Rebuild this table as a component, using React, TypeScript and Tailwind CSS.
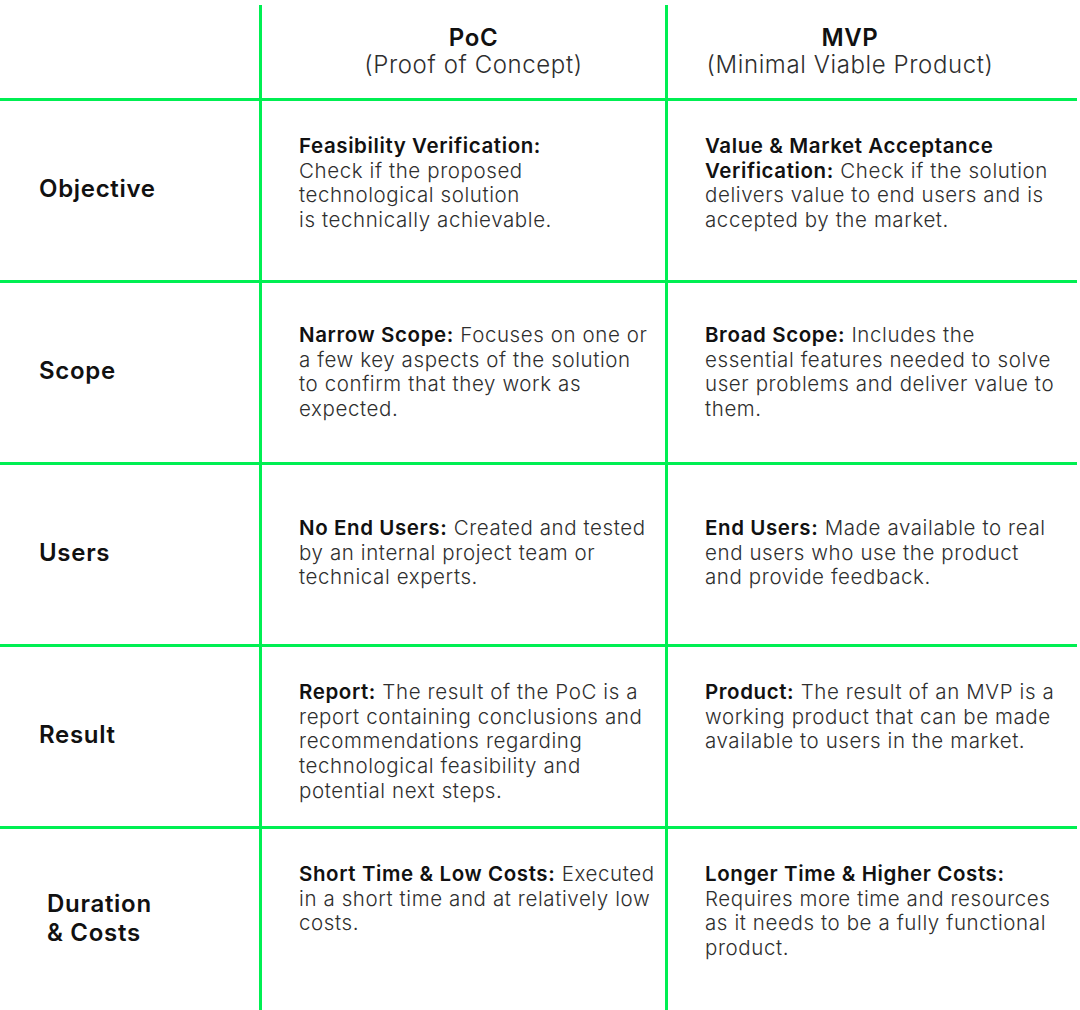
import React from 'react';

type Line = [string, string];

interface Row {
  label: string[];
  labelPad: string;
  top: string;
  poc: Line[];
  mvp: Line[];
}

const ROWS: Row[] = [
  {
    label: ['Objective'],
    labelPad: 'pl-[39px]',
    top: 'pt-[33px]',
    poc: [
      ['Feasibility Verification:', ''],
      ['', 'Check if the proposed'],
      ['', 'technological solution'],
      ['', 'is technically achievable.'],
    ],
    mvp: [
      ['Value & Market Acceptance', ''],
      ['Verification:', ' Check if the solution'],
      ['', 'delivers value to end users and is'],
      ['', 'accepted by the market.'],
    ],
  },
  {
    label: ['Scope'],
    labelPad: 'pl-[39px]',
    top: 'pt-[40px]',
    poc: [
      ['Narrow Scope:', ' Focuses on one or'],
      ['', 'a few key aspects of the solution'],
      ['', 'to confirm that they work as'],
      ['', 'expected.'],
    ],
    mvp: [
      ['Broad Scope:', ' Includes the'],
      ['', 'essential features needed to solve'],
      ['', 'user problems and deliver value to'],
      ['', 'them.'],
    ],
  },
  {
    label: ['Users'],
    labelPad: 'pl-[39px]',
    top: 'pt-[51px]',
    poc: [
      ['No End Users:', ' Created and tested'],
      ['', 'by an internal project team or'],
      ['', 'technical experts.'],
    ],
    mvp: [
      ['End Users:', ' Made available to real'],
      ['', 'end users who use the product'],
      ['', 'and provide feedback.'],
    ],
  },
  {
    label: ['Result'],
    labelPad: 'pl-[39px]',
    top: 'pt-[33px]',
    poc: [
      ['Report:', ' The result of the PoC is a'],
      ['', 'report containing conclusions and'],
      ['', 'recommendations regarding'],
      ['', 'technological feasibility and'],
      ['', 'potential next steps.'],
    ],
    mvp: [
      ['Product:', ' The result of an MVP is a'],
      ['', 'working product that can be made'],
      ['', 'available to users in the market.'],
    ],
  },
  {
    label: ['Duration', '& Costs'],
    labelPad: 'pl-[47px]',
    top: 'pt-[33px]',
    poc: [
      ['Short Time & Low Costs:', ' Executed'],
      ['', 'in a short time and at relatively low'],
      ['', 'costs.'],
    ],
    mvp: [
      ['Longer Time & Higher Costs:', ''],
      ['', 'Requires more time and resources'],
      ['', 'as it needs to be a fully functional'],
      ['', 'product.'],
    ],
  },
];

function Cell({ lines, top }: { lines: Line[]; top: string }) {
  return (
    <div className={`flex-1 border-l-[3px] border-[#00ef52] pl-[37px] ${top}`}>
      {lines.map(([b, t], i) => (
        <div key={i} className="whitespace-nowrap text-[20.5px] leading-[24.7px] tracking-[0.6px]">
          {b && <span className="font-semibold text-[#111]">{b}</span>}
          {t && <span className="font-light text-[#2e2e2e]">{t}</span>}
        </div>
      ))}
    </div>
  );
}

export default function App() {
  return (
    <div className="w-[1080px] h-[1010px] bg-white overflow-hidden font-['Inter',sans-serif]">
      <div className="w-[1077px] pt-[5px]">
        {/* header */}
        <div className="flex h-[96px] border-b-[3px] border-[#00ef52]">
          <div className="w-[259px] shrink-0" />
          <div className="w-[406px] shrink-0 border-l-[3px] border-[#00ef52] pl-[20px] pt-[19px] text-center tracking-[0.6px]">
            <div className="text-[24px] leading-[27px] font-semibold text-[#111]">PoC</div>
            <div className="text-[24px] leading-[27px] font-light text-[#2e2e2e]">(Proof of Concept)</div>
          </div>
          <div className="flex-1 border-l-[3px] border-[#00ef52] pr-[45px] pt-[19px] text-center tracking-[0.6px]">
            <div className="text-[24px] leading-[27px] font-semibold text-[#111]">MVP</div>
            <div className="text-[24px] leading-[27px] font-light text-[#2e2e2e]">(Minimal Viable Product)</div>
          </div>
        </div>

        {ROWS.map((r, i) => (
          <div
            key={i}
            className={`flex h-[182px] border-[#00ef52] ${i < ROWS.length - 1 ? 'border-b-[3px]' : ''}`}
          >
            <div className={`w-[259px] shrink-0 flex flex-col justify-center pb-[4px] ${r.labelPad}`}>
              {r.label.map((l, j) => (
                <div key={j} className="text-[24px] leading-[29px] font-semibold tracking-[0.7px] text-[#111]">
                  {l}
                </div>
              ))}
            </div>
            <div className="w-[406px] shrink-0 flex">
              <Cell lines={r.poc} top={r.top} />
            </div>
            <div className="flex-1 flex">
              <Cell lines={r.mvp} top={r.top} />
            </div>
          </div>
        ))}
      </div>
    </div>
  );
}
